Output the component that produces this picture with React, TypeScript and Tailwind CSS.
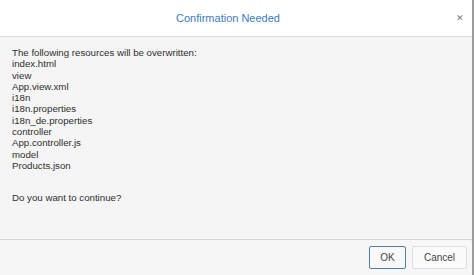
import React from "react";

const files = [
  "index.html",
  "view",
  "App.view.xml",
  "i18n",
  "i18n.properties",
  "i18n_de.properties",
  "controller",
  "App.controller.js",
  "model",
  "Products.json",
];

export default function App() {
  return (
    <div className="flex h-[275px] w-[474px] bg-white font-['Liberation_Sans',Arial,sans-serif]">
      <div className="flex flex-1 flex-col">
        {/* header */}
        <div className="relative flex h-[37px] shrink-0 items-center justify-center border-b border-[#dcdcdc] bg-white pr-[16px]">
          <span className="text-[11px] text-[#3d7cbd]">Confirmation Needed</span>
          <span className="absolute right-[8px] top-[14px] text-[9px] leading-none text-[#777]">
            ✕
          </span>
        </div>

        {/* content */}
        <div className="flex-1 bg-[#f5f5f5] px-[12px] pt-[10px] text-[9.7px] leading-[11.3px] text-[#2e2e2e]">
          <div>The following resources will be overwritten:</div>
          {files.map((f) => (
            <div key={f}>{f}</div>
          ))}
          <div className="mt-[21px]">Do you want to continue?</div>
        </div>

        {/* footer */}
        <div className="flex h-[36px] shrink-0 items-center justify-end gap-[6px] border-t border-[#d6d6d6] bg-[#f7f7f7] pr-[5px]">
          <button className="h-[23px] w-[37px] rounded-[2px] border border-[#4f7ea6] bg-[#f9f9f9] text-[10px] text-[#444]">
            OK
          </button>
          <button className="h-[23px] w-[55px] rounded-[2px] border border-[#dedede] bg-[#fbfbfb] text-[10px] text-[#444]">
            Cancel
          </button>
        </div>
      </div>
      <div className="w-[2px] bg-[#9b9b9b]" />
    </div>
  );
}
